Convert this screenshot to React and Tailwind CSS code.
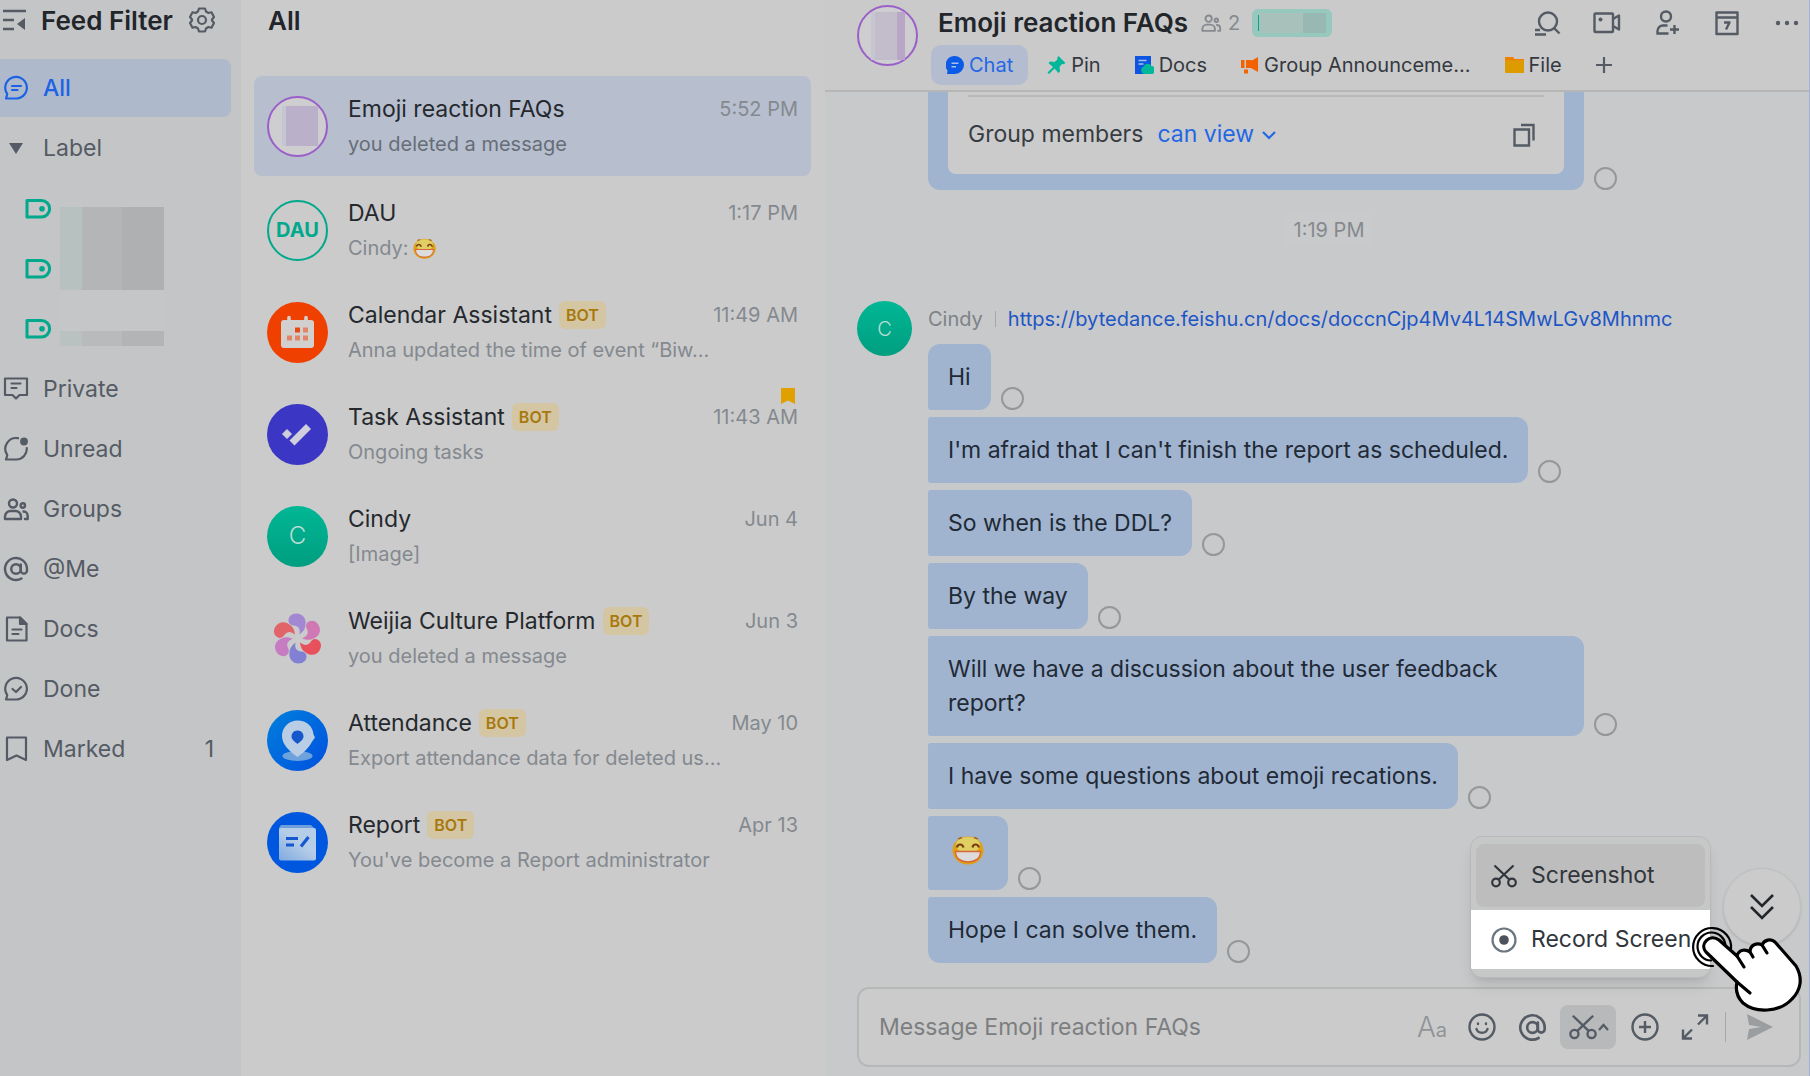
const ICON = 'shrink-0 fill-none stroke-current'

function AllIcon() {
  return (
    <svg width="28" height="28" viewBox="0 0 28 28" className={ICON} strokeWidth="2.2" strokeLinecap="round" strokeLinejoin="round">
      <path d="M4 24.5h10.5A10.8 10.8 0 1 0 5 19.6c.3.6.3 1 0 1.6L4 24.5Z" />
      <path d="M10 12h9M10 16h5.5" />
    </svg>
  )
}

function PrivateIcon() {
  return (
    <svg width="28" height="28" viewBox="0 0 28 28" className={ICON} strokeWidth="2.2" strokeLinecap="round" strokeLinejoin="round">
      <path d="M3 3.500h22v16.500h-7.500L14 23.500 10.500 20H3Z" />
      <path d="M9.500 8.500h9M9.500 13h5" />
    </svg>
  )
}

function UnreadIcon() {
  return (
    <svg width="28" height="28" viewBox="0 0 28 28" className={ICON} strokeWidth="2.2" strokeLinecap="round" strokeLinejoin="round">
      <path d="M16 3.200A10.800 10.800 0 0 0 5 19.600c.3.600.3 1 0 1.600l-1 3.300h10.500A10.800 10.800 0 0 0 24.800 13" />
      <circle cx="22" cy="6.500" r="2.800" fill="currentColor" />
    </svg>
  )
}

function GroupsIcon({ size = 28 }) {
  return (
    <svg width={size} height={size} viewBox="0 0 28 28" className={ICON} strokeWidth="2.400" strokeLinecap="round" strokeLinejoin="round">
      <circle cx="11" cy="8.500" r="4" />
      <path d="M3 24v-2.500a5.500 5.500 0 0 1 5.500-5.500h5a5.500 5.500 0 0 1 5.500 5.500V24Z" />
      <circle cx="20.800" cy="10.500" r="2.200" />
      <path d="M21.500 16.500c2.200 0 4 1.600 4 3.500m-2.500 4h2.700v-3" />
    </svg>
  )
}

function AtIcon({ size = 28 }) {
  return (
    <svg width={size} height={size} viewBox="0 0 28 28" className={ICON} strokeWidth="2.400" strokeLinecap="round">
      <circle cx="14" cy="14" r="4.800" />
      <path d="M18.800 9.500V15.500a3.100 3.100 0 0 0 6.200 0V14a11 11 0 1 0-5.500 9.500" />
    </svg>
  )
}

function DocsIcon() {
  return (
    <svg width="28" height="28" viewBox="0 0 28 28" className={ICON} strokeWidth="2.200" strokeLinecap="round" strokeLinejoin="round">
      <path d="M18 2.500H5v23h19.500V9Z" />
      <path d="M18 2.500V9h6.500Z" fill="currentColor" />
      <path d="M10.500 14.500h9M10.500 19h6" />
    </svg>
  )
}

function DoneIcon() {
  return (
    <svg width="28" height="28" viewBox="0 0 28 28" className={ICON} strokeWidth="2.200" strokeLinecap="round" strokeLinejoin="round">
      <path d="M4 24.500h10.500A10.800 10.800 0 1 0 5 19.600c.3.600.3 1 0 1.600L4 24.500Z" />
      <path d="m10.500 14 3.500 3 5-5" />
    </svg>
  )
}

function MarkedIcon() {
  return (
    <svg width="28" height="28" viewBox="0 0 28 28" className={ICON} strokeWidth="2.200" strokeLinejoin="round">
      <path d="M5 2.500h19v22.500l-9.500-4.500L5 25Z" />
    </svg>
  )
}

function TagIcon() {
  return (
    <svg width="28" height="22" viewBox="0 0 28 22" className="shrink-0 fill-none stroke-[#00a88c]" strokeWidth="3">
      <path d="M3 2.500h14.400a8.200 8.200 0 0 1 0 16.500H3Z" strokeLinejoin="round" />
      <circle cx="18" cy="10.800" r="2.800" className="fill-[#00a88c] stroke-none" />
    </svg>
  )
}

function ScissorsIcon({ size = 28 }) {
  return (
    <svg width={size} height={size} viewBox="0 0 28 28" className={ICON} strokeWidth="2.200">
      <circle cx="6" cy="20.500" r="3.800" />
      <circle cx="22" cy="20.500" r="3.800" />
      <path d="M4.500 3.500 19.500 17.800M23.500 3.500 8.500 17.800" />
    </svg>
  )
}

function GrinEmoji({ size }) {
  return (
    <svg width={size} height={size} viewBox="0 0 32 32" className="shrink-0" role="img" aria-label="grinning face">
      <ellipse cx="16" cy="16.500" rx="15.500" ry="14" fill="#dfa012" />
      <ellipse cx="16" cy="11" rx="12" ry="8" fill="#e0cf62" />
      <path d="M3.500 17.500h25c0 7-5.500 10.500-12.500 10.500S3.500 24.500 3.500 17.500Z" fill="#dcdcdc" stroke="#d9663a" strokeWidth="1.400" />
      <path d="M5 13.500c.5-4 5.500-4 6.500 0M20.500 13.500c.5-4 5.500-4 6.500 0" fill="none" stroke="#7a3f10" strokeWidth="2.200" />
      <path d="m6 5 4-1.500M26 5l-4-1.500" stroke="#a86a1c" strokeWidth="1.600" />
    </svg>
  )
}

const filters = [
  { name: 'Private', icon: PrivateIcon },
  { name: 'Unread', icon: UnreadIcon },
  { name: 'Groups', icon: GroupsIcon },
  { name: '@Me', icon: AtIcon },
  { name: 'Docs', icon: DocsIcon },
  { name: 'Done', icon: DoneIcon },
  { name: 'Marked', icon: MarkedIcon, count: 1 },
]

function Sidebar() {
  return (
    <aside className="w-[241px] shrink-0 bg-[#c4c5c7] text-[#545b64]">
      <div className="flex h-10 items-center">
        <button aria-label="Collapse" className="ml-[3px]">
          <svg width="24" height="22" viewBox="0 0 24 22" className={ICON} strokeWidth="2.400">
            <path d="M0 2h23M0 11h11M0 20h11" />
            <path d="m14 15 8-6v12Z" fill="currentColor" stroke="none" />
          </svg>
        </button>
        <h2 className="ml-[14px] text-[26px] font-semibold text-[#22262b]">Feed Filter</h2>
        <button aria-label="Filter settings" className="ml-4">
          <svg width="26" height="26" viewBox="0 0 26 26" className={ICON} strokeWidth="2.200" strokeLinejoin="round">
            <path d="m10 1.500h6l1 3 2.500 1.500 3-.700 2.500 4.700-2 2.500v1l2 2.500-2.500 4.700-3-.700L17 21.500l-1 3h-6l-1-3L6.500 20l-3 .700L1 16l2-2.500v-1L1 10l2.500-4.700 3 .700L9 4.500Z" />
            <circle cx="13" cy="13" r="4" />
          </svg>
        </button>
      </div>

      <nav className="mt-[19px] text-[23px]">
        <button className="flex h-[58px] w-[231px] items-center gap-[13px] rounded-r-lg bg-[#aebacb] pl-0.5 font-medium text-[#1c62e6]">
          <AllIcon />
          All
        </button>
        <button className="flex h-[62px] w-full items-center gap-5">
          <svg width="14" height="11" viewBox="0 0 14 11" className="ml-[9px] fill-current">
            <path d="M0 0h14L7 11Z" />
          </svg>
          Label
        </button>
        <div className="flex h-[180px]">
          <div className="flex w-[60px] flex-col">
            {['a', 'b', 'c'].map(id => (
              <button key={id} aria-label={`Label ${id}`} className="flex h-[60px] w-full items-center pl-6">
                <TagIcon />
              </button>
            ))}
          </div>
          {/* redacted label names */}
          <div className="mt-7 flex w-[104px] flex-col">
            <div className="flex h-[83px]">
              <div className="w-[22px] bg-[#b7c1bf]" />
              <div className="w-[40px] bg-[#b4b5b6]" />
              <div className="flex-1 bg-[#afb0b1]" />
            </div>
            <div className="h-[41px] bg-[#c5c6c8]" />
            <div className="flex h-[15px]">
              <div className="w-[22px] bg-[#b9c1c1]" />
              <div className="w-[40px] bg-[#b9babb]" />
              <div className="flex-1 bg-[#b3b4b5]" />
            </div>
          </div>
        </div>
        {filters.map(({ name, icon: Icon, count }) => (
          <button key={name} className="flex h-[60px] w-full items-center gap-[13px] pr-[27px] pl-0.5 text-left">
            <Icon />
            <span className="flex-1">{name}</span>
            {count && <span>{count}</span>}
          </button>
        ))}
      </nav>
    </aside>
  )
}

function RedactedAvatar({ soft }) {
  return (
    <div className="flex size-[61px] shrink-0 items-center justify-center rounded-full border-2 border-[#9a5fc8] bg-[#cecdd0]">
      <div className={soft ? 'flex h-12 w-[34px] bg-[#c3bcca]' : 'ml-1 flex h-10 w-9 bg-[#bab0ca]'}>
        <div className="w-1 bg-[#c6c5d2]" />
        {soft && <div className="ml-auto w-2 bg-[#b8a6c6]" />}
      </div>
    </div>
  )
}

function DauAvatar() {
  return (
    <div className="flex size-[61px] shrink-0 items-center justify-center rounded-full border-2 border-[#00a88c] text-xl font-bold text-[#00a88c]">
      DAU
    </div>
  )
}

function CalendarAvatar() {
  return (
    <svg width="61" height="61" viewBox="0 0 61 61" className="shrink-0">
      <circle cx="30.500" cy="30.500" r="30.500" fill="#f04000" />
      <path d="M22 15.500v6M39 15.500v6" stroke="#d2d0cf" strokeWidth="3.600" strokeLinecap="round" />
      <rect x="14" y="18" width="33" height="28" rx="3" fill="#d2d0cf" />
      <rect x="28" y="25.500" width="5" height="5" fill="#e54a12" />
      <path d="M36 25.500h5v5h-5ZM20 33.500h5v5h-5ZM28 33.500h5v5h-5ZM36 33.500h5v5h-5Z" fill="#e28468" />
    </svg>
  )
}

function TaskAvatar() {
  return (
    <svg width="61" height="61" viewBox="0 0 61 61" className="shrink-0">
      <circle cx="30.500" cy="30.500" r="30.500" fill="#3b36c4" />
      <path d="m20 25.500 4.500 4.500-4.500 4.500-4.500-4.500Z" fill="#d0d0dc" stroke="#d0d0dc" strokeLinejoin="round" />
      <path d="M25 39 41.500 22.500" stroke="#d0d0dc" strokeWidth="7" />
    </svg>
  )
}

function CindyAvatar({ small }) {
  return (
    <div className={`${small ? 'size-[55px] text-xl' : 'size-[61px] text-2xl'} flex shrink-0 items-center justify-center rounded-full bg-linear-to-b from-[#00b795] to-[#009e80] font-light text-[#b9dcd5]`}>
      C
    </div>
  )
}

function WeijiaAvatar() {
  const petals = ['#a288d2', '#cf78b4', '#e8505c', '#8280d2', '#c67cc2', '#e06468']
  return (
    <svg width="61" height="61" viewBox="-30.500 -30.500 61 61" className="shrink-0">
      {petals.map((color, i) => (
        <path
          key={color}
          d="M-9-18C-9-22-6-25-1-25 5-25 9-20 8-14 8-10 6-7 2-4 3-10 1-12-3-13-7-13-9-15-9-18Z"
          fill={color}
          transform={`rotate(${i * 60})`}
        />
      ))}
    </svg>
  )
}

function AttendanceAvatar() {
  return (
    <svg width="61" height="61" viewBox="0 0 61 61" className="shrink-0">
      <defs>
        <linearGradient id="attendance" x1="0" y1="0" x2="1" y2="1">
          <stop offset="0" stopColor="#0080dc" />
          <stop offset="1" stopColor="#0050e0" />
        </linearGradient>
      </defs>
      <circle cx="30.500" cy="30.500" r="30.500" fill="url(#attendance)" />
      <ellipse cx="30.500" cy="46" rx="15" ry="5" fill="#6ea2dc" />
      <path d="M30.500 10.500c9 0 15.500 6 16 14l1.500 3-3.500 5c-3 6-9 11-14 14.500-7-5-15.500-12-15.500-21 0-9 7-15.500 15.500-15.500Z" fill="#b9cde4" />
      <path d="M30.500 20.500c4 0 6 3 6 6s-3 5-6 7.500c-3-2.500-6-4.500-6-7.500s2-6 6-6Z" fill="#1458cc" />
    </svg>
  )
}

function ReportAvatar() {
  return (
    <svg width="61" height="61" viewBox="0 0 61 61" className="shrink-0">
      <defs>
        <linearGradient id="report" x1="0" y1="1" x2=".5" y2=".4">
          <stop offset="0" stopColor="#7fa9e0" />
          <stop offset="1" stopColor="#b6cde8" />
        </linearGradient>
      </defs>
      <circle cx="30.500" cy="30.500" r="30.500" fill="#0057df" />
      <path d="M14 13h30l4 4v6H12v-7Z" fill="#6f9fdb" />
      <rect x="12" y="16" width="37" height="32.500" rx="2" fill="url(#report)" />
      <path d="M19 26.500h12M19 33h8M41.500 25 34 34.500" stroke="#1459d0" strokeWidth="3.200" />
    </svg>
  )
}

const feeds = [
  { name: 'DAU', avatar: DauAvatar, text: 'Cindy:', emoji: true, time: '1:17 PM' },
  { name: 'Calendar Assistant', avatar: CalendarAvatar, bot: true, text: 'Anna updated the time of event “Biw...', time: '11:49 AM' },
  { name: 'Task Assistant', avatar: TaskAvatar, bot: true, text: 'Ongoing tasks', time: '11:43 AM', flag: true },
  { name: 'Cindy', avatar: CindyAvatar, text: '[Image]', time: 'Jun 4' },
  { name: 'Weijia Culture Platform', avatar: WeijiaAvatar, bot: true, text: 'you deleted a message', time: 'Jun 3' },
  { name: 'Attendance', avatar: AttendanceAvatar, bot: true, text: 'Export attendance data for deleted us...', time: 'May 10' },
  { name: 'Report', avatar: ReportAvatar, bot: true, text: "You've become a Report administrator", time: 'Apr 13' },
]

function FeedRow({ name, avatar: Avatar, bot, text, emoji, time, flag, selected }) {
  return (
    <button
      className={`${selected ? 'mb-[3px] h-[100px] bg-[#b7bfce]' : 'h-[102px]'} relative flex w-full items-center gap-5 rounded-lg px-[13px] text-left`}
    >
      <Avatar />
      <div className="min-w-0 flex-1">
        <div className="flex h-9 items-center gap-[7px]">
          <span className="text-[23px] text-[#25292e]">{name}</span>
          {bot && (
            <span className="flex h-7 items-center rounded-md bg-[#d4c6a3] px-[7px] text-base font-semibold text-[#a8780c]">BOT</span>
          )}
          <span className="ml-auto text-xl text-[#84898f]">{time}</span>
        </div>
        <div className={`${selected ? 'text-[#666d78]' : 'text-[#84898f]'} flex h-[34px] items-center gap-1 text-xl whitespace-nowrap`}>
          {text}
          {emoji && <GrinEmoji size={23} />}
        </div>
      </div>
      {flag && (
        <svg width="14" height="16" viewBox="0 0 14 16" className="absolute top-[5px] right-4 fill-[#dfa000]">
          <path d="M0 0h14v16l-7-3.500L0 16Z" />
        </svg>
      )}
    </button>
  )
}

function FeedList() {
  return (
    <section className="w-[584px] shrink-0 bg-[#cbcbcb]">
      <h1 className="flex h-10 items-center pl-[27px] text-[26px] font-semibold text-[#22262b]">All</h1>
      <div className="mt-9 pr-[14px] pl-[13px]">
        <FeedRow selected name="Emoji reaction FAQs" avatar={RedactedAvatar} text="you deleted a message" time="5:52 PM" />
        {feeds.map(feed => (
          <FeedRow key={feed.name} {...feed} />
        ))}
      </div>
    </section>
  )
}

const tabs = [
  {
    name: 'Chat',
    icon: (
      <svg width="18" height="18" viewBox="0 0 18 18">
        <path d="M9 0a9 9 0 1 1 0 18H1l.5-3.500A9 9 0 0 1 9 0Z" fill="#0c5be6" />
        <path d="M5.500 7.200h7M5.500 10.800h4.500" stroke="#a9c0e6" strokeWidth="1.600" />
      </svg>
    ),
  },
  {
    name: 'Pin',
    icon: (
      <svg width="19" height="18" viewBox="0 0 18 18">
        <path d="M11 0l7 7-2 1.200-1.500-.2-2.500 3 .5 4.500L11 17l-4-4.500L1.500 18 0 16.500 5.500 11 1 7l1.500-1.500L7 6l3-2.500-.2-2Z" fill="#00b899" />
      </svg>
    ),
  },
  {
    name: 'Docs',
    icon: (
      <svg width="19" height="18" viewBox="0 0 19 18">
        <path d="M0 0h16v18H0Z" fill="#0c55e0" />
        <path d="M3.500 4.500h8M3.500 8h5" stroke="#a9c0e6" strokeWidth="1.600" />
        <path d="M9 18a4 4 0 0 1-.5-7.500 4.500 4.500 0 0 1 8-.5A4 4 0 0 1 15.500 18Z" fill="#00b899" />
      </svg>
    ),
  },
  {
    name: 'Group Announceme...',
    icon: (
      <svg width="18" height="18" viewBox="0 0 18 18" fill="#f26200">
        <path d="M17 1v15l-7-4V5ZM5 4h5.500v8H5ZM0 4h3.500v8H0ZM3 13.500h4V17.500H3Z" />
      </svg>
    ),
  },
  {
    name: 'File',
    icon: (
      <svg width="19" height="18" viewBox="0 0 19 18">
        <path d="M0 1h8l1.500 2H19v4H0Z" fill="#ee8200" />
        <path d="M0 4.500h19V16q0 1-1 1H1q-1 0-1-1Z" fill="#dd9b00" />
      </svg>
    ),
  },
]

function ChatHeader() {
  return (
    <header className="flex h-[92px] shrink-0 border-b-2 border-[#b6b6b6] bg-[#cacaca] pl-8">
      <div className="mt-[5px]">
        <RedactedAvatar soft />
      </div>
      <div className="ml-[13px] flex min-w-0 flex-1 flex-col">
        <div className="flex h-[45px] items-center pl-[7px]">
          <h2 className="text-[26px] font-semibold text-[#22262b]">Emoji reaction FAQs</h2>
          <span className="ml-3 flex items-center gap-1.5 text-xl text-[#858a90]">
            <GroupsIcon size={22} />2
          </span>
          <span className="ml-3 flex h-7 w-20 items-center rounded-md bg-[#96c8be] px-1.5">
            <span className="h-4 w-px bg-[#00a88c]" />
            <span className="h-5 w-11 bg-[#a9c1bb]" />
            <span className="h-5 flex-1 bg-[#98b8b3]" />
          </span>
          <div className="ml-auto flex items-center text-[#545b64]">
            <button aria-label="Search in chat" className="flex w-[60px] justify-center">
              <svg width="28" height="28" viewBox="0 0 28 28" className={ICON} strokeWidth="2.400">
                <circle cx="15" cy="12.500" r="9" />
                <path d="m21 19 5.500 5.500M2 21h5M2 25.500h11" />
              </svg>
            </button>
            <button aria-label="Start video call" className="flex w-[60px] justify-center">
              <svg width="28" height="28" viewBox="0 0 28 28" className={ICON} strokeWidth="2.400" strokeLinejoin="round">
                <rect x="1.500" y="4.500" width="18.500" height="18.500" rx="1" />
                <path d="m20 10 6-3.500v14l-6-3.500" />
                <circle cx="7.500" cy="10.500" r="2" fill="currentColor" stroke="none" />
              </svg>
            </button>
            <button aria-label="Add members" className="flex w-[60px] justify-center">
              <svg width="28" height="28" viewBox="0 0 28 28" className={ICON} strokeWidth="2.400">
                <circle cx="13" cy="7.500" r="5" />
                <path d="M15.500 24.500H4.500V22a5.500 5.500 0 0 1 5.500-5.500h4.500M17 20.500h9M21.500 16v9" />
              </svg>
            </button>
            <button aria-label="Calendar" className="flex w-[60px] justify-center">
              <svg width="28" height="28" viewBox="0 0 28 28" className={ICON} strokeWidth="2.400" strokeLinejoin="round">
                <path d="M3.500 3.500h21v21.500h-21ZM3.500 8.500h21M11 13.500h5.500L13 20.500" />
              </svg>
            </button>
            <button aria-label="More" className="mr-[-8px] flex w-[60px] justify-center">
              <svg width="28" height="28" viewBox="0 0 28 28" className="shrink-0 fill-current">
                <circle cx="5" cy="14" r="2.200" />
                <circle cx="14" cy="14" r="2.200" />
                <circle cx="23" cy="14" r="2.200" />
              </svg>
            </button>
          </div>
        </div>
        <div className="flex h-10 items-center text-xl text-[#34393f]">
          {tabs.map(({ name, icon }, i) => (
            <button
              key={name}
              className={`${i === 0 ? 'bg-[#b4bcd0] text-[#2467e4]' : ''} mr-1 flex h-10 items-center gap-[5px] rounded-[10px] px-[15px] whitespace-nowrap`}
            >
              {icon}
              {name}
            </button>
          ))}
          <button aria-label="Add tab" className="pl-[15px] text-[#545b64]">
            <svg width="16" height="16" viewBox="0 0 16 16" className={ICON} strokeWidth="2.200">
              <path d="M8 0v16M0 8h16" />
            </svg>
          </button>
        </div>
      </div>
    </header>
  )
}

function ReadMark() {
  return <span className="size-[23px] shrink-0 rounded-full border-2 border-[#95989a]" />
}

const messages = [
  { text: 'Hi', shape: 'rounded-tl-xl rounded-bl-[3px]' },
  { text: "I'm afraid that I can't finish the report as scheduled." },
  { text: 'So when is the DDL?' },
  { text: 'By the way' },
  { text: 'Will we have a discussion about the user feedback report?' },
  { text: 'I have some questions about emoji recations.' },
  { emoji: true },
  { text: 'Hope I can solve them.', shape: 'rounded-tl-[3px] rounded-bl-xl' },
]

function Messages() {
  return (
    <div className="min-h-0 flex-1 overflow-hidden pl-8 text-[23px] text-[#1f2a36]">
      <div className="ml-[71px] flex items-end gap-2.5">
        <div className="h-[98px] w-[656px] rounded-b-xl bg-[#a0b4d0] px-5 pb-4">
          <div className="h-full rounded-b-lg bg-[#cbcbcb] px-5 pt-[3px]">
            <div className="flex h-full items-center border-t-2 border-[#b9b9b9] pb-0.5 text-[#373c42]">
              Group members
              <button className="ml-3.5 flex items-center gap-2 text-[#2467e4]">
                can view
                <svg width="14" height="10" viewBox="0 0 14 10" className={ICON} strokeWidth="2.200">
                  <path d="m1 2 6 6 6-6" />
                </svg>
              </button>
              <button aria-label="Copy" className="mr-2 ml-auto text-[#545b64]">
                <svg width="24" height="24" viewBox="0 0 24 24" className={ICON} strokeWidth="2.400">
                  <path d="M2.500 6.500h14.500v16H2.500ZM9 2h12.500v15.500" />
                </svg>
              </button>
            </div>
          </div>
        </div>
        <ReadMark />
      </div>

      <div className="mt-6 flex justify-center pr-2">
        <time className="flex h-8 items-center rounded bg-[#c9cacb] px-2.5 text-xl text-[#85898d]">1:19 PM</time>
      </div>

      <div className="mt-[55px] flex gap-4">
        <CindyAvatar small />
        <div>
          <div className="flex h-9 items-center text-xl text-[#7d8287]">
            Cindy
            <span className="mx-3 h-4 w-px bg-[#a5a7a9]" />
            <a href="https://bytedance.feishu.cn/docs/doccnCjp4Mv4L14SMwLGv8Mhnmc" className="text-[#1d56c6]">
              https://bytedance.feishu.cn/docs/doccnCjp4Mv4L14SMwLGv8Mhnmc
            </a>
          </div>
          <div className="mt-[7px] flex flex-col gap-[7px]">
            {messages.map(({ text, emoji, shape = 'rounded-l-[3px]' }, i) => (
              <div key={i} className="flex items-end gap-2.5">
                <div className={`${shape} ${emoji ? 'h-[74px] px-6 pt-[18px]' : 'px-5 py-4'} max-w-[656px] rounded-r-xl bg-[#a0b4d0] leading-[34px]`}>
                  {emoji ? <GrinEmoji size={32} /> : text}
                </div>
                <ReadMark />
              </div>
            ))}
          </div>
        </div>
      </div>
    </div>
  )
}

function CaptureMenu() {
  return (
    <div className="absolute right-[98px] bottom-[98px] w-[241px] overflow-hidden rounded-xl border border-[#b9b9b9] bg-[#c6c7c7] pt-[7px] pb-2 text-[23px] text-[#31363c] shadow-lg">
      <button className="mx-[5px] flex h-[63px] w-[229px] items-center gap-[13px] rounded-lg bg-[#bdbdbd] pl-3.5">
        <ScissorsIcon />
        Screenshot
      </button>
      <button className="mt-[3px] flex h-[59px] w-full items-center gap-[13px] bg-white pl-[19px] whitespace-nowrap">
        <svg width="28" height="28" viewBox="0 0 28 28" className="shrink-0 fill-none stroke-[#6d7683]" strokeWidth="2.200">
          <circle cx="14" cy="14" r="11.500" />
          <circle cx="14" cy="14" r="4.800" className="fill-[#4c535e] stroke-none" />
        </svg>
        Record Screen
      </button>
    </div>
  )
}

function PointerHand() {
  return (
    <svg width="118" height="92" viewBox="0 0 118 92" className="absolute right-0 bottom-[60px] fill-none stroke-black" strokeWidth="3.200" strokeLinecap="round" strokeLinejoin="round">
      <path d="M40 25A19 19 0 1 0 22 42" strokeWidth="2.200" />
      <path d="M34.500 22A14 14 0 1 0 20 36.500" strokeWidth="2.200" />
      <path
        d="M28 16 46 32C48 25 55 25 59 28 59 21 66 18 71 21 73 16 80 14 84 18L105 42C112 54 110 66 101 75 88 89 64 89 52 79 46 73 44 67 46 58L15 28C8 20 19 9 28 16Z"
        className="fill-white"
      />
      <path d="m46 32 7 11M59 28l3 5M71 21l5 8M46 58l13 11" />
    </svg>
  )
}

function Composer() {
  return (
    <div className="mr-2 mb-[9px] ml-8 flex h-20 shrink-0 items-center rounded-xl border-2 border-[#b6b7b7] bg-[#cbcbcb] pl-5 text-[#545b64]">
      <input
        aria-label="Message"
        placeholder="Message Emoji reaction FAQs"
        className="min-w-0 flex-1 bg-transparent text-[23px] outline-none placeholder:text-[#7c7e80]"
      />
      <button className="w-[50px] text-center text-[#909397]" aria-label="Text format">
        <span className="text-[28px] font-light">A</span>
        <span className="text-xl">a</span>
      </button>
      <button aria-label="Emoji" className="flex w-[50px] justify-center">
        <svg width="28" height="28" viewBox="0 0 28 28" className={ICON} strokeWidth="2.400" strokeLinecap="round">
          <circle cx="14" cy="14" r="12.500" />
          <path d="M8.500 16c1.500 5 9.500 5 11 0M10 10.500v.500M18 10.500v.500" />
        </svg>
      </button>
      <button aria-label="Mention" className="flex w-[50px] justify-center">
        <AtIcon size={31} />
      </button>
      <button aria-label="Capture" className="mx-[3px] flex h-11 w-14 items-center justify-center rounded-lg bg-[#b7b9ba]">
        <ScissorsIcon size={30} />
        <svg width="11" height="8" viewBox="0 0 11 8" className={ICON} strokeWidth="2.200">
          <path d="m1 7 4.500-5L10 7" />
        </svg>
      </button>
      <button aria-label="Add" className="flex w-[52px] justify-center">
        <svg width="28" height="28" viewBox="0 0 28 28" className={ICON} strokeWidth="2.400">
          <circle cx="14" cy="14" r="12.500" />
          <path d="M14 8v12M8 14h12" />
        </svg>
      </button>
      <button aria-label="Expand" className="flex w-12 justify-center">
        <svg width="28" height="28" viewBox="0 0 28 28" className={ICON} strokeWidth="2.400">
          <path d="M17 2.500h9v9M26 2.500l-9 9M11 25.500H2v-9M2 25.500l9-9" />
        </svg>
      </button>
      <span className="ml-1.5 h-[30px] w-px bg-[#a6a8a9]" />
      <button aria-label="Send" className="mr-1.5 flex w-[67px] justify-center">
        <svg width="28" height="28" viewBox="0 0 28 28" className="fill-[#9b9ea1]">
          <path d="M1 1l26 13L1 27l2-11 12-2L3 12Z" />
        </svg>
      </button>
    </div>
  )
}

export default function App() {
  return (
    <div className="flex h-screen overflow-hidden border-r border-[#a3b0dc] font-[Inter,sans-serif] leading-normal">
      <Sidebar />
      <FeedList />
      <main className="relative flex min-w-0 flex-1 flex-col bg-[#c8c9ca]">
        <ChatHeader />
        <Messages />
        <Composer />
        <button aria-label="Jump to latest" className="absolute right-2 bottom-[130px] flex size-[78px] items-center justify-center rounded-full border border-[#bfbfbf] bg-[#cbcbcb] text-[#22262b] shadow">
          <svg width="26" height="28" viewBox="0 0 26 28" className={ICON} strokeWidth="2.600">
            <path d="m2 2 11 11L24 2M2 14l11 11 11-11" />
          </svg>
        </button>
        <CaptureMenu />
        <PointerHand />
      </main>
    </div>
  )
}
